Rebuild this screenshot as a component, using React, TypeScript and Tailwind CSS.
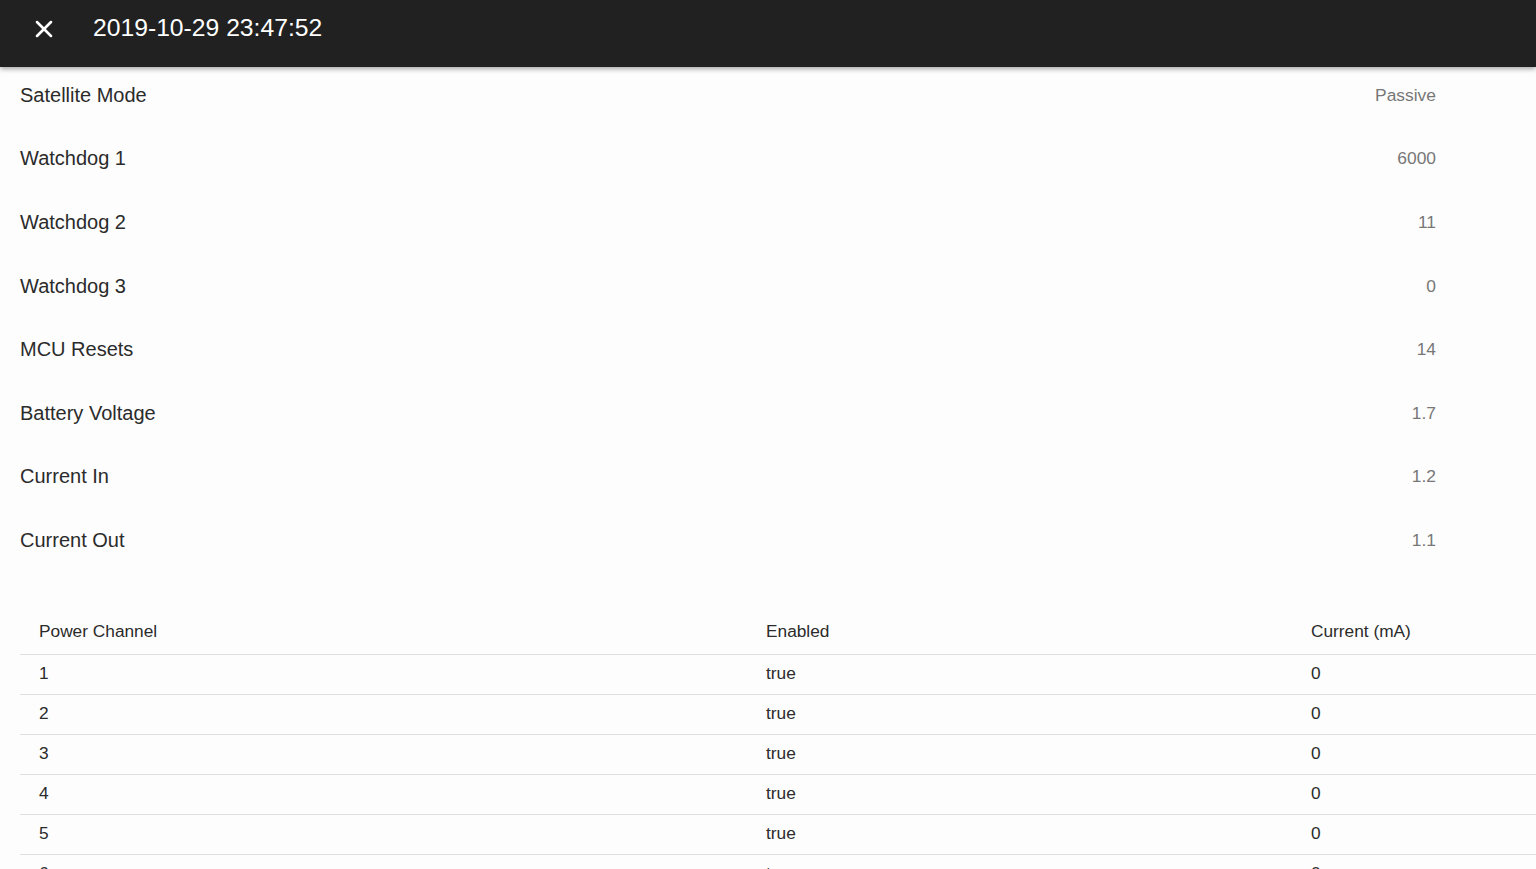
import { X } from "lucide-react";

const stats = [
  { label: "Satellite Mode", value: "Passive" },
  { label: "Watchdog 1", value: "6000" },
  { label: "Watchdog 2", value: "11" },
  { label: "Watchdog 3", value: "0" },
  { label: "MCU Resets", value: "14" },
  { label: "Battery Voltage", value: "1.7" },
  { label: "Current In", value: "1.2" },
  { label: "Current Out", value: "1.1" },
];

const channels = [1, 2, 3, 4, 5, 6, 7, 8].map((n) => ({
  channel: n,
  enabled: "true",
  current: 0,
}));

function App() {
  return (
    <div className="h-[869px] overflow-hidden bg-[#fdfdfd] font-['Liberation_Sans',Arial,sans-serif]">
      <header className="relative z-10 flex h-[67px] items-center bg-[#212121] pb-[10px] text-white shadow-[0_2px_5px_rgba(0,0,0,0.35)]">
        <button className="ml-[29px] flex h-[30px] w-[30px] items-center justify-center">
          <X size={28} strokeWidth={2.2} />
        </button>
        <h1 className="ml-[34px] text-[24.7px] leading-none">2019-10-29 23:47:52</h1>
      </header>

      <div className="-mt-1">
        {stats.map((s) => (
          <div
            key={s.label}
            className="flex h-[63.6px] items-center justify-between pl-[20px] pr-[100px]"
          >
            <span className="text-[20px] text-[#2b2b2b]">{s.label}</span>
            <span className="text-[17.4px] text-[#777]">{s.value}</span>
          </div>
        ))}
      </div>

      <div className="ml-[20px] mt-[39px] text-[17.3px] text-[#2b2b2b]">
        <div className="grid h-[44px] grid-cols-[727px_545px_1fr] items-end border-b border-[#e0e0e0] pb-[9px]">
          <div className="pl-[19px]">Power Channel</div>
          <div className="pl-[19px]">Enabled</div>
          <div className="pl-[19px]">Current (mA)</div>
        </div>
        {channels.map((c) => (
          <div
            key={c.channel}
            className="grid h-[40px] grid-cols-[727px_545px_1fr] items-center border-b border-[#e0e0e0]"
          >
            <div className="pl-[19px]">{c.channel}</div>
            <div className="pl-[19px]">{c.enabled}</div>
            <div className="pl-[19px]">{c.current}</div>
          </div>
        ))}
      </div>
    </div>
  );
}

export default App;
